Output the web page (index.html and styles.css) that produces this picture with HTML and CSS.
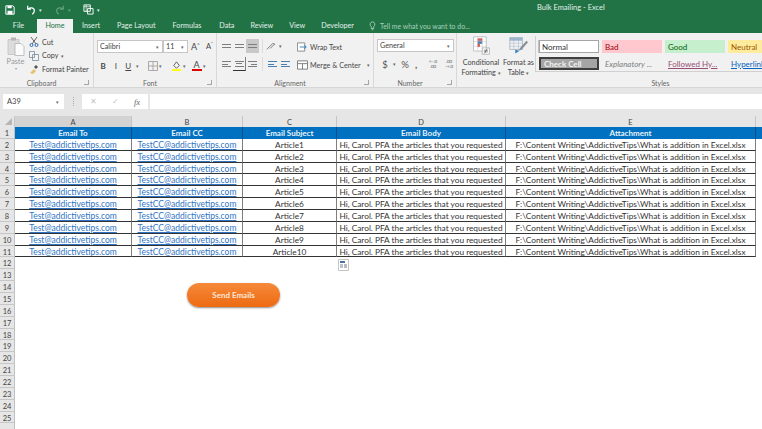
FILE: index.html
```html
<!DOCTYPE html>
<html lang="en">
<head>
<meta charset="utf-8">
<title>Bulk Emailing - Excel</title>
<link rel="stylesheet" href="styles.css">
</head>
<body>
<header class="chrome">
  <div class="titlebar">
    <div class="qat">
      <svg class="qi" viewBox="0 0 12 12"><path d="M1 1h8.500L11 2.500V11H1z" fill="none" stroke="#fff" stroke-width="1.200"/><path d="M3 1h5v3H3zM3 7h6v4H3z" fill="#fff"/></svg>
      <svg class="qi undo" viewBox="0 0 12 12"><path d="M2 1v4h4M2.500 5C5 2.500 10 3 10 7c0 2-1 3-2.500 4" fill="none" stroke="#fff" stroke-width="1.500"/></svg>
      <span class="caret">▾</span>
      <svg class="qi redo" viewBox="0 0 12 12"><path d="M10 1v4H6M9.500 5C7 2.500 2 3 2 7c0 2 1 3 2.500 4" fill="none" stroke="#5f9e7d" stroke-width="1.500"/></svg>
      <span class="caret dim">▾</span>
      <svg class="qi form" viewBox="0 0 12 12"><path d="M1 1h7v7H1zM5 5h6v6H5z" fill="none" stroke="#fff"/><path d="M1 3h7M3.500 1v7" stroke="#fff" stroke-width=".7"/></svg>
      <span class="caret">▾</span>
    </div>
    <div class="doc-title">Bulk Emailing - Excel</div>
  </div>
  <nav class="tabs">
    <span class="tab file">File</span>
    <span class="tab active">Home</span>
    <span class="tab t-insert">Insert</span>
    <span class="tab t-page">Page Layout</span>
    <span class="tab t-form">Formulas</span>
    <span class="tab t-data">Data</span>
    <span class="tab t-rev">Review</span>
    <span class="tab t-view">View</span>
    <span class="tab t-dev">Developer</span>
    <span class="tell">
      <svg class="bulb" viewBox="0 0 8 12"><path d="M4 1a3 3 0 0 0-1.500 5.500V9h3V6.500A3 3 0 0 0 4 1zM3 10.500h2" fill="none" stroke="#bfe0cc" stroke-width=".9"/></svg>
      Tell me what you want to do...
    </span>
  </nav>
</header>

<section class="ribbon">
  <div class="group g-clip">
    <div class="gbody clip-body">
      <div class="paste">
        <svg class="paste-ic" viewBox="0 0 18 20"><path d="M1 3h11v15H1z" fill="#dcdcdc" stroke="#bdbdbd" stroke-width=".7"/><path d="M4 1h5v3H4z" fill="#b5b5b5"/><path d="M8 7h6l3 3v9H8z" fill="#fbfbfb" stroke="#aaa" stroke-width=".7"/></svg>
        <span class="muted">Paste</span>
        <span class="muted tiny">▾</span>
      </div>
      <div class="clip-list">
        <span class="clip-row"><svg class="ci" viewBox="0 0 10 10"><path d="M2 0l5 7M8 0L3 7" stroke="#666" fill="none"/><circle cx="2.500" cy="8" r="1.500" fill="none" stroke="#2f6fb3"/><circle cx="7.500" cy="8" r="1.500" fill="none" stroke="#2f6fb3"/></svg>Cut</span>
        <span class="clip-row"><svg class="ci" viewBox="0 0 10 10"><path d="M.5.500h5v6h-5zM3.500 3.500h6v6h-6z" fill="#f4f4f4" stroke="#7a8a9a" stroke-width=".8"/></svg>Copy <i class="mini">▾</i></span>
        <span class="clip-row"><svg class="ci" viewBox="0 0 10 10"><path d="M1 9l4-4 2 2-3 3z" fill="#e6c26a"/><path d="M5 3l2-2 2 2-2 2z" fill="#555"/></svg>Format Painter</span>
      </div>
    </div>
    <div class="glabel">Clipboard<i class="launcher"></i></div>
  </div>

  <div class="group g-font">
    <div class="gbody font-body">
      <div class="row">
        <span class="combo fname">Calibri<i class="mini">▾</i></span>
        <span class="combo fsize">11<i class="mini">▾</i></span>
        <span class="grow">A<sup>^</sup></span>
        <span class="grow small">A<sup>ˇ</sup></span>
      </div>
      <div class="row fmt">
        <b class="fb">B</b><i class="fb">I</i><u class="fb">U</u><i class="mini">▾</i>
        <svg class="fi border" viewBox="0 0 10 10"><path d="M.5.500h9v9h-9zM5 .500v9M.5 5h9" fill="none" stroke="#a9a9a9"/></svg><i class="mini">▾</i>
        <svg class="fi fill" viewBox="0 0 12 12"><path d="M3 6l3-4 3 4-3 3z" fill="#f7f7f7" stroke="#555"/><path d="M1 10h10v2H1z" fill="#ffff00"/></svg><i class="mini">▾</i>
        <span class="fcolor">A</span><i class="mini">▾</i>
      </div>
    </div>
    <div class="glabel">Font<i class="launcher"></i></div>
  </div>

  <div class="group g-align">
    <div class="gbody align-body">
      <div class="align-grid">
        <div class="row">
          <span class="li"><i></i><i></i></span><span class="li mid"><i></i><i></i></span><span class="li on"><i></i><i></i></span>
          <span class="sep"></span>
          <svg class="fi orient" viewBox="0 0 12 12"><path d="M1 10L8 3M8 3l3 1M5 9l5-5" stroke="#666" fill="none"/></svg><i class="mini">▾</i>
        </div>
        <div class="row">
          <span class="li three"><i></i><i></i><i></i></span><span class="li three c"><i></i><i></i><i></i></span><span class="li three r"><i></i><i></i><i></i></span>
          <span class="sep"></span>
          <span class="li three ind"><i></i><i></i><i></i></span><span class="li three ind"><i></i><i></i><i></i></span>
        </div>
      </div>
      <div class="align-cmds">
        <span class="cmd"><svg class="ci wrap" viewBox="0 0 12 10"><path d="M.5.500h8v9h-8z" fill="#fff" stroke="#888"/><path d="M3 5h7M8 3l2 2-2 2" stroke="#2f7fc0" fill="none"/></svg>Wrap Text</span>
        <span class="cmd"><svg class="ci wrap" viewBox="0 0 12 10"><path d="M.5.500h11v9H.5zM.5 3.500h11M6 3.500v6" fill="#fff" stroke="#777"/></svg>Merge &amp; Center <i class="mini far">▾</i></span>
      </div>
    </div>
    <div class="glabel">Alignment<i class="launcher"></i></div>
  </div>

  <div class="group g-num">
    <div class="gbody num-body">
      <span class="combo general">General<i class="mini">▾</i></span>
      <div class="row numfmt">
        <span class="cur">$</span><i class="mini">▾</i><span class="cur pct">%</span><span class="cur comma">,</span>
        <span class="dec">←.0<br>.00</span><span class="dec">.00<br>→.0</span>
      </div>
    </div>
    <div class="glabel">Number<i class="launcher"></i></div>
  </div>

  <div class="group g-style">
    <div class="gbody style-body">
      <div class="bigcmd">
        <svg class="big" viewBox="0 0 22 24"><path d="M1 1h16v18H1z" fill="#fff" stroke="#999" stroke-width=".7"/><path d="M6 3h6v3H6z" fill="#d9534f"/><path d="M6 6h6v4H6z" fill="#5b7fb5"/><path d="M6 10h3v4H6z" fill="#d9534f"/><path d="M1 7h16M1 13h16M6 1v18M12 1v18" stroke="#bbb" stroke-width=".5" fill="none"/><path d="M12 15h9v8h-9z" fill="#fff" stroke="#888" stroke-width=".7"/><path d="M14 18h5M14 20h5M18 16l-3 6" stroke="#333" stroke-width=".7"/></svg>
        <span>Conditional<br>Formatting <i class="mini">▾</i></span>
      </div>
      <div class="bigcmd fat">
        <svg class="big" viewBox="0 0 24 24"><path d="M1 2h16v15H1z" fill="#eef1f5" stroke="#8a97a6" stroke-width=".7"/><path d="M1 2h16v4H1z" fill="#9fb6cf"/><path d="M1 9h16M1 13h16M6 2v15M12 2v15" stroke="#9aa6b2" stroke-width=".5"/><path d="M22 6l-8 9-2 4 4-2 8-9z" fill="#8a8f96"/><path d="M8 17l5 2-5 3z" fill="#2f7fc0"/></svg>
        <span>Format as<br>Table <i class="mini">▾</i></span>
      </div>
      <div class="gallery">
        <span class="st normal">Normal</span><span class="st bad">Bad</span><span class="st good">Good</span><span class="st neutral">Neutral</span>
        <span class="st check">Check Cell</span><span class="st expl">Explanatory ...</span><span class="st followed">Followed Hy...</span><span class="st hyper">Hyperlink</span>
      </div>
    </div>
    <div class="glabel">Styles</div>
  </div>
</section>

<section class="formula">
  <span class="namebox">A39<i class="mini">▾</i></span>
  <span class="dots"></span>
  <span class="fxbox"><span class="x">✕</span><span class="x">✓</span><span class="fx">fx</span></span>
  <span class="finput"></span>
</section>

<main class="sheet">
  <div class="grid" id="grid">
    <div class="corner"><i></i></div>
    <div class="ch sel">A</div><div class="ch">B</div><div class="ch">C</div><div class="ch">D</div><div class="ch">E</div><div class="ch last"></div>

    <div class="rh">1</div><div class="hd">Email To</div><div class="hd">Email CC</div><div class="hd">Email Subject</div><div class="hd">Email Body</div><div class="hd">Attachment</div><div class="hd end"></div>

    <div class="rh">2</div><div class="c lnk">Test@addictivetips.com</div><div class="c lnk">TestCC@addictivetips.com</div><div class="c">Article1</div><div class="c">Hi, Carol. PFA the articles that you requested</div><div class="c">F:\Content Writing\AddictiveTips\What is addition in Excel.xlsx</div><div class="e"></div>
    <div class="rh">3</div><div class="c lnk">Test@addictivetips.com</div><div class="c lnk">TestCC@addictivetips.com</div><div class="c">Article2</div><div class="c">Hi, Carol. PFA the articles that you requested</div><div class="c">F:\Content Writing\AddictiveTips\What is addition in Excel.xlsx</div><div class="e"></div>
    <div class="rh">4</div><div class="c lnk">Test@addictivetips.com</div><div class="c lnk">TestCC@addictivetips.com</div><div class="c">Article3</div><div class="c">Hi, Carol. PFA the articles that you requested</div><div class="c">F:\Content Writing\AddictiveTips\What is addition in Excel.xlsx</div><div class="e"></div>
    <div class="rh">5</div><div class="c lnk">Test@addictivetips.com</div><div class="c lnk">TestCC@addictivetips.com</div><div class="c">Article4</div><div class="c">Hi, Carol. PFA the articles that you requested</div><div class="c">F:\Content Writing\AddictiveTips\What is addition in Excel.xlsx</div><div class="e"></div>
    <div class="rh">6</div><div class="c lnk">Test@addictivetips.com</div><div class="c lnk">TestCC@addictivetips.com</div><div class="c">Article5</div><div class="c">Hi, Carol. PFA the articles that you requested</div><div class="c">F:\Content Writing\AddictiveTips\What is addition in Excel.xlsx</div><div class="e"></div>
    <div class="rh">7</div><div class="c lnk">Test@addictivetips.com</div><div class="c lnk">TestCC@addictivetips.com</div><div class="c">Article6</div><div class="c">Hi, Carol. PFA the articles that you requested</div><div class="c">F:\Content Writing\AddictiveTips\What is addition in Excel.xlsx</div><div class="e"></div>
    <div class="rh">8</div><div class="c lnk">Test@addictivetips.com</div><div class="c lnk">TestCC@addictivetips.com</div><div class="c">Article7</div><div class="c">Hi, Carol. PFA the articles that you requested</div><div class="c">F:\Content Writing\AddictiveTips\What is addition in Excel.xlsx</div><div class="e"></div>
    <div class="rh">9</div><div class="c lnk">Test@addictivetips.com</div><div class="c lnk">TestCC@addictivetips.com</div><div class="c">Article8</div><div class="c">Hi, Carol. PFA the articles that you requested</div><div class="c">F:\Content Writing\AddictiveTips\What is addition in Excel.xlsx</div><div class="e"></div>
    <div class="rh">10</div><div class="c lnk">Test@addictivetips.com</div><div class="c lnk">TestCC@addictivetips.com</div><div class="c">Article9</div><div class="c">Hi, Carol. PFA the articles that you requested</div><div class="c">F:\Content Writing\AddictiveTips\What is addition in Excel.xlsx</div><div class="e"></div>
    <div class="rh">11</div><div class="c lnk">Test@addictivetips.com</div><div class="c lnk">TestCC@addictivetips.com</div><div class="c">Article10</div><div class="c">Hi, Carol. PFA the articles that you requested</div><div class="c">F:\Content Writing\AddictiveTips\What is addition in Excel.xlsx</div><div class="e"></div>

    <div class="rh">12</div><div class="blank"></div>
    <div class="rh">13</div><div class="blank"></div>
    <div class="rh">14</div><div class="blank"></div>
    <div class="rh">15</div><div class="blank"></div>
    <div class="rh">16</div><div class="blank"></div>
    <div class="rh">17</div><div class="blank"></div>
    <div class="rh">18</div><div class="blank"></div>
    <div class="rh">19</div><div class="blank"></div>
    <div class="rh">20</div><div class="blank"></div>
    <div class="rh">21</div><div class="blank"></div>
    <div class="rh">22</div><div class="blank"></div>
    <div class="rh">23</div><div class="blank"></div>
    <div class="rh">24</div><div class="blank"></div>
    <div class="rh">25</div><div class="blank"></div>
    <div class="rh tail"></div><div class="blank"></div>
  </div>
  <span class="pasteopt"><svg viewBox="0 0 11 12"><path d="M.5.500h10v11H.5z" fill="#fff" stroke="#c4c4c4"/><path d="M2 2h5v2H2z" fill="#4a6fa5"/><path d="M2 5h3v4H2z" fill="#b9c4d2"/><path d="M6 6h3M6 8h3" stroke="#555" stroke-width=".8"/></svg></span>
  <button class="send">Send Emails</button>
</main>
</body>
</html>
```
FILE: styles.css
```css
* { box-sizing: border-box; }
html, body { margin: 0; padding: 0; }
body {
  width: 762px; height: 429px; overflow: hidden; background: #fff;
  font-family: Lato, "Open Sans", sans-serif; font-size: 8px; color: #444;
}
i { font-style: normal; }

.chrome { background: #217346; height: 33px; color: #fff; }
.titlebar { height: 19px; position: relative; display: flex; align-items: center; padding-left: 5px; }
.qat { display: flex; align-items: center; }
.qi { width: 10px; height: 10px; display: block; }
.undo { margin-left: 11px; }
.redo { margin-left: 13px; }
.form { margin-left: 12px; width: 11px; height: 11px; }
.caret { font-size: 5px; margin-left: 3px; color: #e5efe9; }
.caret.dim { color: #6aa585; }
.doc-title { position: absolute; left: 537px; top: 3px; font-size: 7.5px; color: #e4efe9; }

.tabs { height: 14px; display: flex; align-items: center; font-size: 7.200px; color: #e3efe8; white-space: nowrap; }
.tab { display: block; line-height: 14px; }
.file { width: 37px; text-align: center; }
.active { width: 36px; text-align: center; background: #f1f1f1; color: #217346; height: 14px; }
.t-insert { margin-left: 9px; }
.t-page { margin-left: 17px; }
.t-form { margin-left: 17px; }
.t-data { margin-left: 18px; }
.t-rev { margin-left: 16px; }
.t-view { margin-left: 16px; }
.t-dev { margin-left: 16px; }
.tell { margin-left: 15px; display: flex; align-items: center; color: #a8d0b9; gap: 4px; font-size: 6.900px; }
.bulb { width: 7px; height: 10px; }

.ribbon { height: 55px; background: #f1f1f1; display: flex; border-bottom: 1px solid #d6d6d6; overflow: hidden; }
.group { display: flex; flex-direction: column; border-right: 1px solid #d8d8d8; flex: none; position: relative; }
.gbody { flex: 1; display: flex; min-height: 0; }
.glabel { height: 11px; line-height: 14px; text-align: center; font-size: 7px; color: #666; position: relative; padding-right: 10px; }
.launcher { position: absolute; right: 4px; top: 4px; width: 5px; height: 5px; border: 1px solid #a5a5a5; border-width: 0 1px 1px 0; }
.muted { color: #9a9a9a; font-size: 7.500px; line-height: 9px; }
.tiny { font-size: 4px; line-height: 5px; }
.mini { font-size: 5px; color: #666; }
.row { display: flex; align-items: center; }

.g-clip { width: 94px; }
.clip-body { padding: 3px 0 0 6px; }
.paste { width: 19px; display: flex; flex-direction: column; align-items: center; }
.paste-ic { width: 18px; height: 21px; }
.clip-list { margin-left: 4px; display: flex; flex-direction: column; gap: 1px; font-size: 7.200px; color: #444; }
.clip-row { display: flex; align-items: center; gap: 3px; height: 12.500px; white-space: nowrap; }
.ci { width: 10px; height: 10px; flex: none; }

.g-font { width: 123px; }
.font-body { flex-direction: column; padding: 7px 0 0 3px; gap: 6px; }
.combo { display: flex; align-items: center; justify-content: space-between; background: #fff; border: 1px solid #c6c6c6; height: 13px; padding: 0 3px 0 2px; font-size: 7.200px; color: #444; }
.fname { width: 66px; }
.fsize { width: 25px; }
.grow { width: 13px; text-align: center; font-size: 9px; margin-left: 1px; }
.grow sup { font-size: 5px; vertical-align: 3px; line-height: 0; color: #666; }
.grow.small { font-size: 7.500px; }
.fmt { height: 13px; }
.fb { width: 12.500px; text-align: center; font-size: 8px; color: #444; }
.fmt > .mini { margin: 0 2px 0 1px; }
.fi { width: 10px; height: 10px; flex: none; }
.border { margin-left: 7px; }
.fill { width: 11px; height: 11px; margin-left: 7px; }
.fcolor { width: 10px; text-align: center; margin-left: 4px; font-size: 9px; line-height: 9px; color: #444; border-bottom: 2px solid #e00000; }

.g-align { width: 157px; }
.align-body { padding: 5px 0 0 3px; }
.align-grid { width: 77px; flex: none; display: flex; flex-direction: column; gap: 2px; }
.align-grid .row { height: 16px; }
.li { width: 13px; height: 14px; flex: none; display: flex; flex-direction: column; justify-content: center; align-items: center; gap: 2px; }
.li i { width: 9px; height: 1px; background: #7e7e7e; display: block; }
.li.on { background: #c9c9c9; }
.li.three { gap: 1.500px; }
.li.three i:nth-child(2) { width: 6px; margin-right: 3px; }
.li.three.c i:nth-child(2) { margin-right: 0; }
.li.three.r i:nth-child(2) { margin-right: -3px; }
.li.ind i { background: #4a7fb0; }
.sep { width: 1px; height: 14px; margin: 0 3px; background: #dcdcdc; }
.orient { margin-right: 3px; }
.align-cmds { display: flex; flex-direction: column; gap: 4px; padding: 2px 0 0 0; font-size: 7.200px; }
.cmd { display: flex; align-items: center; gap: 2px; height: 14px; white-space: nowrap; color: #4a4a4a; }
.wrap { width: 11px; height: 10px; }
.far { margin-left: 4px; }

.g-num { width: 83px; }
.num-body { flex-direction: column; padding: 6px 0 0 3px; gap: 5px; }
.general { width: 77px; }
.numfmt { padding-left: 2px; gap: 2px; height: 14px; }
.cur { font-size: 9.500px; color: #555; width: 12px; text-align: center; }
.pct { margin-left: 1px; }
.comma { font-weight: 700; width: 6px; margin-right: 5px; }
.dec { font-size: 4.500px; line-height: 5px; color: #555; width: 14px; text-align: center; }

.g-style { width: 407px; border-right: 0; }
.g-style .glabel { padding-right: 0; }
.style-body { padding-top: 3px; }
.bigcmd { width: 48px; display: flex; flex-direction: column; align-items: center; text-align: center; font-size: 7.200px; line-height: 9.500px; color: #444; gap: 3px; flex: none; white-space: nowrap; }
.bigcmd.fat { width: 31px; margin-left: -2px; }
.big { width: 19px; height: 19px; flex: none; }
.gallery { display: grid; grid-template-columns: 63px 63px 63px 63px; grid-auto-rows: 13px; row-gap: 4px; padding: 4px 0 0 3px; margin-left: 1px; border-left: 1px solid #d0d0d0; border-bottom: 1px solid #d0d0d0; height: 36px; flex: 1; overflow: hidden; }
.st { display: flex; align-items: center; padding-left: 3px; font-size: 8px; width: 60px; white-space: nowrap; overflow: hidden; }
.normal { background: #fff; border: 1px solid #a5a5a5; color: #333; box-shadow: -1px 0 0 #c0c0c0; padding-left: 2px; }
.bad { background: #ffc7ce; color: #9c0006; }
.good { background: #c6efce; color: #006100; }
.neutral { background: #ffeb9c; color: #9c5700; }
.check { background: #a5a5a5; color: #f2f2f2; font-weight: 700; border: 2px double #3f3f3f; }
.expl { color: #7f7f7f; font-style: italic; }
.followed { color: #954f72; text-decoration: underline; }
.hyper { color: #0563c1; text-decoration: underline; }

.formula { height: 22px; background: #e6e6e6; display: flex; padding: 6px 0 1px 3px; align-items: stretch; }
.namebox { width: 61px; background: #fff; display: flex; align-items: center; justify-content: space-between; padding: 0 5px 0 4px; font-size: 7.500px; color: #444; }
.dots { width: 1px; margin: 3px 9px 3px 9px; border-left: 1px dotted #aaa; }
.fxbox { width: 66px; background: #fff; display: flex; align-items: center; padding-left: 8px; margin-left: -1px; }
.x { width: 22px; color: #c4c4c4; font-size: 7.500px; }
.fx { font-family: "Liberation Serif", serif; font-style: italic; font-size: 8.500px; color: #666; }
.finput { flex: 1; background: #fff; margin-left: 2px; }

.sheet { position: relative; height: 319px; background: #e6e6e6; padding-top: 6px; overflow: hidden; }
.grid { display: grid; grid-template-columns: 15px 117px 111px 94px 169px 250px 6px; grid-template-rows: 11px repeat(26, 11.860px); background: #fff; }
.corner { background: #e6e6e6; position: relative; border-right: 1px solid #c6c6c6; }
.corner i { position: absolute; right: 2px; bottom: 2px; width: 0; height: 0; border-left: 7px solid transparent; border-bottom: 7px solid #b5b5b5; }
.ch { background: #e6e6e6; border-right: 1px solid #c6c6c6; text-align: center; font-size: 7.500px; line-height: 13px; color: #444; overflow: hidden; }
.ch.sel { background: #d3d3d3; }
.ch.last { border-right: 0; }
.rh { grid-column: 1; background: #e6e6e6; border-right: 1px solid #c0c0c0; border-bottom: 1px solid #c6c6c6; text-align: center; font-size: 7.500px; line-height: 13px; color: #444; overflow: hidden; }
.hd { background: #0070c0; color: #e9f3fa; font-weight: 700; text-align: center; font-size: 8px; line-height: 13px; border-right: 1px solid #0b4f86; white-space: nowrap; overflow: hidden; }
.hd.end { border-right: 0; }
.c { border-right: 1px solid #7f7f7f; border-bottom: 1px solid #333; text-align: center; font-size: 8.300px; line-height: 13px; color: #333; white-space: nowrap; overflow: hidden; }
.lnk { color: #2f74c4; font-size: 8.500px; text-decoration: underline; text-decoration-thickness: 1px; }
.e { background: #fff; }
.blank { grid-column: 2 / -1; background: #fff; }

.pasteopt { position: absolute; left: 338px; top: 149px; width: 11px; height: 12px; display: block; }
.pasteopt svg { width: 11px; height: 12px; display: block; }
.send {
  position: absolute; left: 187px; top: 173px; width: 93px; height: 24px; padding: 0;
  border: 0; border-radius: 12px; background: linear-gradient(#f58a3a, #ee6a12);
  color: #fde7d4; font-family: Lato, sans-serif; font-size: 8px; font-weight: 700;
  box-shadow: 0 1px 2px rgba(0, 0, 0, .45);
}
```
